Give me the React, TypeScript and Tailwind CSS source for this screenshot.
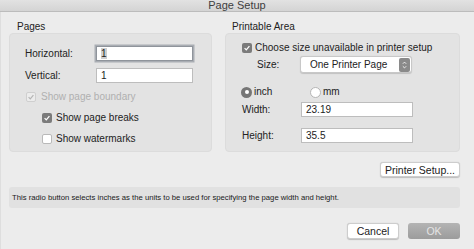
import React from "react";

const font = { fontFamily: '"Liberation Sans", Arial, sans-serif' };

function Check({ checked, disabled }: { checked?: boolean; disabled?: boolean }) {
  if (disabled) {
    return (
      <span className="flex h-[10px] w-[10px] shrink-0 items-center justify-center rounded-[2px] border border-[#cfcfcf] bg-[#ececec]">
        <svg viewBox="0 0 10 10" className="h-[8px] w-[8px]">
          <path d="M2 5.2 L4.1 7.3 L8 2.6" fill="none" stroke="#b4b4b4" strokeWidth="1.5" />
        </svg>
      </span>
    );
  }
  if (checked) {
    return (
      <span className="flex h-[10px] w-[10px] shrink-0 items-center justify-center rounded-[2px] bg-[#7b7b7b]">
        <svg viewBox="0 0 10 10" className="h-[8px] w-[8px]">
          <path d="M2 5.2 L4.1 7.3 L8 2.6" fill="none" stroke="#ffffff" strokeWidth="1.6" />
        </svg>
      </span>
    );
  }
  return <span className="block h-[10px] w-[10px] shrink-0 rounded-[2px] border border-[#b9b9b9] bg-white" />;
}

function Radio({ on }: { on?: boolean }) {
  return on ? (
    <span className="flex h-[11px] w-[11px] items-center justify-center rounded-full bg-[#767676]">
      <span className="block h-[4px] w-[4px] rounded-full bg-white" />
    </span>
  ) : (
    <span className="block h-[11px] w-[11px] rounded-full border border-[#b5b5b5] bg-white" />
  );
}

function Field({ value, w, focus }: { value: string; w: string; focus?: boolean }) {
  return (
    <div
      className={`flex h-[15px] items-center border bg-white pl-[4px] text-[10px] text-[#222] ${w} ${
        focus ? "border-[#8f949b] shadow-[0_0_0_1.5px_#a9adb3]" : "border-[#bdbdbd]"
      }`}
    >
      {focus ? <span className="bg-[#cfcfcf] leading-[11px]">{value}</span> : value}
    </div>
  );
}

export default function App() {
  return (
    <div
      className="flex h-[249px] w-[474px] flex-col overflow-hidden bg-[#ececec] text-[10px] leading-[12px] text-[#222]"
      style={font}
    >
      {/* title bar */}
      <div className="flex h-[12px] items-center justify-center border-b border-[#bcbcbc] bg-gradient-to-b from-[#e2e2e2] to-[#d4d4d4]">
        <span className="text-[11px] leading-[11px] text-[#404040]">Page Setup</span>
      </div>

      <div className="flex flex-1 flex-col border-l border-[#dedede] pl-[8px] pr-[14px]">
        <div className="mt-[9px] flex gap-[13px]">
          {/* Pages */}
          <div className="flex w-[203px] flex-col">
            <div className="h-[12px] pl-[8px]">Pages</div>
            <div className="h-[119px] rounded-[4px] border border-[#dcdcdc] bg-[#e3e3e3] pl-[15px] pt-[12px]">
              <div className="flex items-center">
                <span className="w-[71px]">Horizontal:</span>
                <Field value="1" w="w-[97px]" focus />
              </div>
              <div className="mt-[7px] flex items-center">
                <span className="w-[71px]">Vertical:</span>
                <Field value="1" w="w-[97px]" />
              </div>
              <div className="mt-[8px] flex h-[12px] items-center gap-[5px] pl-[1px] text-[#b0b0b0]">
                <Check disabled />
                <span>Show page boundary</span>
              </div>
              <div className="mt-[9px] flex h-[12px] items-center gap-[4px] pl-[17px]">
                <Check checked />
                <span>Show page breaks</span>
              </div>
              <div className="mt-[9px] flex h-[12px] items-center gap-[4px] pl-[17px]">
                <Check />
                <span>Show watermarks</span>
              </div>
            </div>
          </div>

          {/* Printable Area */}
          <div className="flex w-[235px] flex-col">
            <div className="h-[12px] pl-[7px]">Printable Area</div>
            <div className="h-[119px] rounded-[4px] border border-[#dcdcdc] bg-[#e3e3e3] pl-[16px] pt-[8px]">
              <div className="flex h-[12px] items-center gap-[3px]">
                <Check checked />
                <span>Choose size unavailable in printer setup</span>
              </div>
              <div className="mt-[2px] flex items-center">
                <span className="w-[44px] pl-[15px]">Size:</span>
                <div className="ml-[14px] flex h-[17px] w-[112px] items-center justify-between rounded-[3px] border border-[#c8c8c8] bg-white pl-[9px] pr-[1px] shadow-[0_0.5px_1px_rgba(0,0,0,0.15)]">
                  <span>One Printer Page</span>
                  <span className="flex h-[14px] w-[11px] items-center justify-center rounded-[2px] bg-[#8a8a8a]">
                    <svg viewBox="0 0 8 12" className="h-[10px] w-[7px]">
                      <path d="M2 4.5 L4 2.5 L6 4.5 M2 7.5 L4 9.5 L6 7.5" fill="none" stroke="#fff" strokeWidth="1" />
                    </svg>
                  </span>
                </div>
              </div>
              <div className="mt-[13px] flex h-[12px] items-center">
                <span className="ml-[-1px] flex w-[69px] items-center gap-[2px]">
                  <Radio on />
                  <span>inch</span>
                </span>
                <span className="flex items-center gap-[2px]">
                  <Radio />
                  <span>mm</span>
                </span>
              </div>
              <div className="mt-[4px] flex items-center">
                <span className="w-[59px]">Width:</span>
                <Field value="23.19" w="w-[112px]" />
              </div>
              <div className="mt-[11px] flex items-center">
                <span className="w-[59px]">Height:</span>
                <Field value="35.5" w="w-[112px]" />
              </div>
            </div>
          </div>
        </div>

        <div className="mt-[10px] flex justify-end">
          <div className="flex h-[15px] w-[80px] items-center justify-center rounded-[3px] border border-[#cdcdcd] bg-white text-[10.5px] shadow-[0_0.5px_1px_rgba(0,0,0,0.2)]">
            Printer Setup...
          </div>
        </div>

        <div className="mt-[10px] flex h-[21px] items-center rounded-[3px] bg-[#e1e1e1] pl-[3px] text-[7.7px] text-[#1a1a1a]">
          This radio button selects inches as the units to be used for specifying the page width and height.
        </div>

        <div className="mt-[15px] flex justify-end gap-[9px]">
          <div className="flex h-[16px] w-[52px] items-center justify-center rounded-[3px] border border-[#cdcdcd] bg-white text-[10.5px] shadow-[0_0.5px_1px_rgba(0,0,0,0.2)]">
            Cancel
          </div>
          <div className="flex h-[16px] w-[52px] items-center justify-center rounded-[3px] bg-gradient-to-b from-[#b4b4b4] to-[#9c9c9c] text-[10.5px] text-[#e4e4e4]">
            OK
          </div>
        </div>
      </div>
    </div>
  );
}
